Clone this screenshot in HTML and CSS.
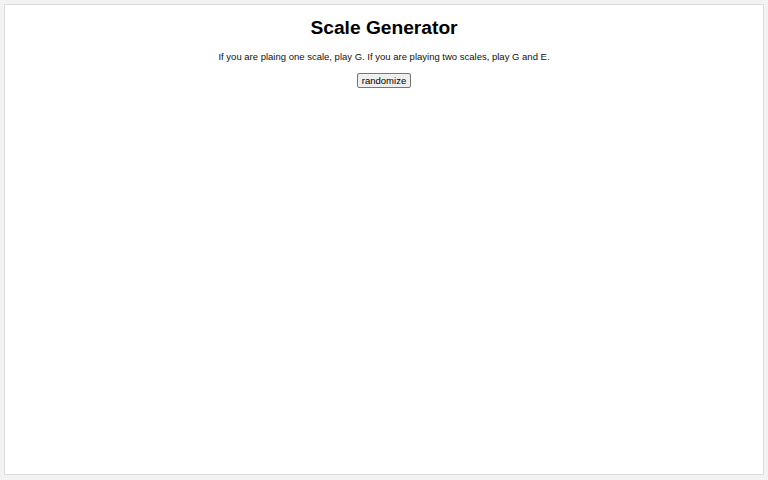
FILE: index.html
```html
<!DOCTYPE html>
<html>
<head>
<meta charset="utf-8">
<link rel="stylesheet" href="styles.css">
</head>
<body>
<main class="panel">
  <h1 class="title">Scale Generator</h1>
  <p class="message">If you are plaing one scale, play G. If you are playing two scales, play G and E.</p>
  <button class="btn" type="button">randomize</button>
</main>
</body>
</html>
```
FILE: styles.css
```css
html, body {
  margin: 0;
  padding: 0;
  background: #f3f3f3;
}
body {
  padding: 4px 4px 5px 4px;
  height: 480px;
  box-sizing: border-box;
  font-family: "Liberation Sans", Arial, sans-serif;
}
.panel {
  box-sizing: border-box;
  height: 100%;
  background: #ffffff;
  border: 1px solid #dcdcdc;
  display: flex;
  flex-direction: column;
  align-items: center;
  color: #000;
}
.title {
  margin: 11px 0 0 0;
  font-size: 19.2px;
  font-weight: bold;
  line-height: 24px;
}
.message {
  margin: 11px 0 0 0;
  font-size: 9.5px;
  line-height: 12px;
  color: #111;
}
.btn {
  margin-top: 10px;
  font-family: "Liberation Sans", Arial, sans-serif;
  font-size: 9.5px;
  line-height: 11px;
  padding: 1px 4px;
  background: #efefef;
  border: 1px solid #767676;
  border-radius: 2px;
  color: #000;
}
```
